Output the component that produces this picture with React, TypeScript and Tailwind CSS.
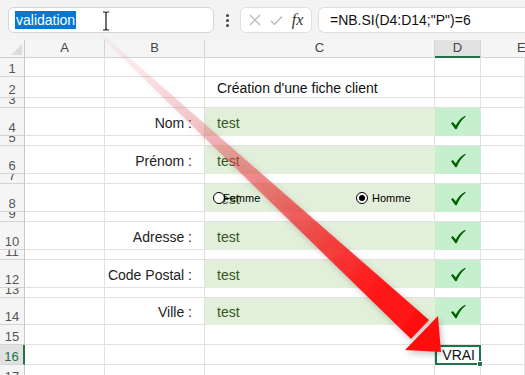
import React from "react";

// grille : en-tête de ligne, A, B, C, D, E
const GRID = "grid grid-cols-[25px_80px_100px_230px_46px_1fr]";
const FONT = { fontFamily: "'Liberation Sans', Arial, sans-serif" };

type RowDef = {
  n: number;
  h: string;
  label?: string;
  value?: string;
  title?: string;
  radios?: boolean;
  vrai?: boolean;
};

const ROWS: RowDef[] = [
  { n: 1, h: "h-[20px]" },
  { n: 2, h: "h-[21px]", title: "Création d'une fiche client" },
  { n: 3, h: "h-[10px]" },
  { n: 4, h: "h-[28px]", label: "Nom :", value: "test" },
  { n: 5, h: "h-[10px]" },
  { n: 6, h: "h-[28px]", label: "Prénom :", value: "test" },
  { n: 7, h: "h-[10px]" },
  { n: 8, h: "h-[28px]", value: "test", radios: true },
  { n: 9, h: "h-[10px]" },
  { n: 10, h: "h-[28px]", label: "Adresse :", value: "test" },
  { n: 11, h: "h-[10px]" },
  { n: 12, h: "h-[28px]", label: "Code Postal :", value: "test" },
  { n: 13, h: "h-[10px]" },
  { n: 14, h: "h-[27px]", label: "Ville :", value: "test" },
  { n: 15, h: "h-[20px]" },
  { n: 16, h: "h-[20px]", vrai: true },
  { n: 17, h: "h-[20px]" },
];

function Check() {
  return (
    <svg width="16" height="15" viewBox="0 0 16 15">
      <path
        d="M1 8.2 L2.8 7 L5.8 10.6 C8 6.2 11 3 15.2 0.8 L15.6 1.8 C12 4.4 9.2 8.4 6.6 14.2 L5.4 14.2 Z"
        fill="#006100"
      />
    </svg>
  );
}

function Radio({ on }: { on?: boolean }) {
  return (
    <span className="w-[12px] h-[12px] rounded-full border border-black bg-white flex items-center justify-center">
      {on && <span className="w-[6px] h-[6px] rounded-full bg-black" />}
    </span>
  );
}

function Row({ r }: { r: RowDef }) {
  const filled = !!r.value;
  const tall = r.h === "h-[28px]" || r.h === "h-[27px]";
  const pad = tall ? " pb-[4px]" : " pb-[1px]";
  const cell = "border-r border-b border-[#e1e1e1] overflow-hidden flex items-end leading-[16px]" + pad;
  return (
    <div className={GRID + " " + r.h}>
      <div
        className={
          "border-b border-[#d4d4d4] overflow-hidden flex items-end justify-center text-[13px] leading-[15px] " +
          (r.vrai
            ? "bg-[#e1e1e1] border-r-2 border-r-[#217346] text-[#217346]"
            : "bg-[#f5f5f5] border-r border-r-[#c8c8c8] text-[#555]")
        }
      >
        {r.n}
      </div>
      <div className={cell} />
      <div className={cell + " justify-end pr-[12px] text-[14px] text-[#222]"}>{r.label}</div>
      <div
        className={
          "relative " +
          (filled
            ? "bg-[#e2efda] border-r border-b border-[#e2efda] flex items-end leading-[16px] pb-[4px] pl-[12px] text-[14px] text-[#375623]"
            : cell + " pl-[12px] text-[14px] text-[#111]")
        }
      >
        {r.value ?? r.title}
        {r.radios && (
          <>
            <div className="absolute left-[8px] top-[6px] h-[16px] flex items-center gap-[1px] text-[11px] text-black">
              <Radio />
              <span className="-ml-[3px]">Femme</span>
            </div>
            <div className="absolute left-[151px] top-[6px] h-[16px] flex items-center gap-[4px] text-[11px] text-black">
              <Radio on />
              <span>Homme</span>
            </div>
          </>
        )}
      </div>
      <div
        className={
          filled
            ? "bg-[#c6efce] border-r border-b border-[#c6efce] flex items-center justify-center pt-[1px]"
            : r.vrai
            ? "relative border-2 border-[#217346] flex items-end justify-end leading-[16px] pr-[4px] pb-[0px] text-[14px] text-[#111]"
            : cell
        }
      >
        {filled && <Check />}
        {r.vrai && (
          <>
            VRAI
            <span className="absolute -right-[4px] -bottom-[4px] w-[6px] h-[6px] bg-[#217346] border border-white" />
          </>
        )}
      </div>
      <div className={cell} />
    </div>
  );
}

function Arrow() {
  return (
    <svg className="absolute inset-0 pointer-events-none" width="525" height="375" viewBox="0 0 525 375">
      <defs>
        <linearGradient id="shaft" gradientUnits="userSpaceOnUse" x1="100" y1="34" x2="420" y2="330">
          <stop offset="0" stopColor="#e8707a" stopOpacity="0.04" />
          <stop offset="0.3" stopColor="#e4505a" stopOpacity="0.3" />
          <stop offset="0.6" stopColor="#ee3838" stopOpacity="0.75" />
          <stop offset="0.85" stopColor="#ff1a1a" stopOpacity="1" />
          <stop offset="1" stopColor="#ff0f0f" stopOpacity="1" />
        </linearGradient>
        <filter id="shadow" x="-10%" y="-10%" width="120%" height="120%">
          <feDropShadow dx="2" dy="3" stdDeviation="3" floodColor="#000" floodOpacity="0.22" />
        </filter>
      </defs>
      <g filter="url(#shadow)">
        <polygon points="99,35 101,33 429,320 411,339" fill="url(#shaft)" />
        <polygon points="405,350 438,316 441,352" fill="#ff0f0f" />
      </g>
    </svg>
  );
}

export default function App() {
  return (
    <div className="relative w-[525px] h-[375px] overflow-hidden bg-white" style={FONT}>
      {/* barre de formule */}
      <div className="h-[40px] bg-[#f3f3f3] flex items-center px-[8px] gap-[6px]">
        <div className="w-[206px] h-[26px] bg-white border border-[#d4d4d4] rounded-md flex items-center pl-[6px] relative">
          <span className="bg-[#0078d7] text-white text-[14px] leading-[18px] px-[1px]">validation</span>
          <svg className="absolute left-[92px] top-[3px]" width="10" height="20" viewBox="0 0 10 20">
            <path d="M2 1 H4 Q5 1 5 3 V17 Q5 19 4 19 H2 M8 1 H6 Q5 1 5 3 M5 17 Q5 19 6 19 H8" stroke="#111" strokeWidth="1.2" fill="none" />
          </svg>
        </div>
        <div className="w-[14px] flex flex-col items-center gap-[2px]">
          <span className="w-[3px] h-[3px] bg-[#444] rounded-full" />
          <span className="w-[3px] h-[3px] bg-[#444] rounded-full" />
          <span className="w-[3px] h-[3px] bg-[#444] rounded-full" />
        </div>
        <div className="w-[72px] h-[26px] bg-white border border-[#dedede] rounded-md flex items-center justify-around px-[3px]">
          <svg width="12" height="12" viewBox="0 0 12 12">
            <path d="M1 1 L11 11 M11 1 L1 11" stroke="#b5b5b5" strokeWidth="1.2" />
          </svg>
          <svg width="13" height="11" viewBox="0 0 13 11">
            <path d="M1 6 L4.5 9.5 L12 1.5" stroke="#b5b5b5" strokeWidth="1.2" fill="none" />
          </svg>
          <span className="italic text-[16px] text-[#333] leading-none" style={{ fontFamily: "'Liberation Serif', serif" }}>
            fx
          </span>
        </div>
        <div className="flex-1 h-[26px] bg-white border border-[#dedede] rounded-l-md border-r-0 flex items-center pl-[11px] text-[14px] text-[#111] -mr-[8px]">
          =NB.SI(D4:D14;"P")=6
        </div>
      </div>

      {/* en-têtes de colonnes */}
      <div className={GRID + " h-[17px] text-[13px] text-[#444] leading-[16px]"}>
        <div className="bg-[#f5f5f5] border-r border-b border-[#c8c8c8] relative">
          <svg className="absolute right-[2px] bottom-[2px]" width="11" height="11" viewBox="0 0 11 11">
            <polygon points="11,0 11,11 0,11" fill="#dcdcdc" />
          </svg>
        </div>
        <div className="bg-[#f5f5f5] border-r border-b border-[#d4d4d4] text-center">A</div>
        <div className="bg-[#f5f5f5] border-r border-b border-[#d4d4d4] text-center">B</div>
        <div className="bg-[#f5f5f5] border-r border-b border-[#d4d4d4] text-center">C</div>
        <div className="bg-[#e1e1e1] border-r border-[#d4d4d4] border-b-2 border-b-[#217346] text-center">D</div>
        <div className="bg-[#f5f5f5] border-b border-[#d4d4d4] pl-[36px]">E</div>
      </div>

      {ROWS.map((r) => (
        <Row key={r.n} r={r} />
      ))}

      <Arrow />
    </div>
  );
}
